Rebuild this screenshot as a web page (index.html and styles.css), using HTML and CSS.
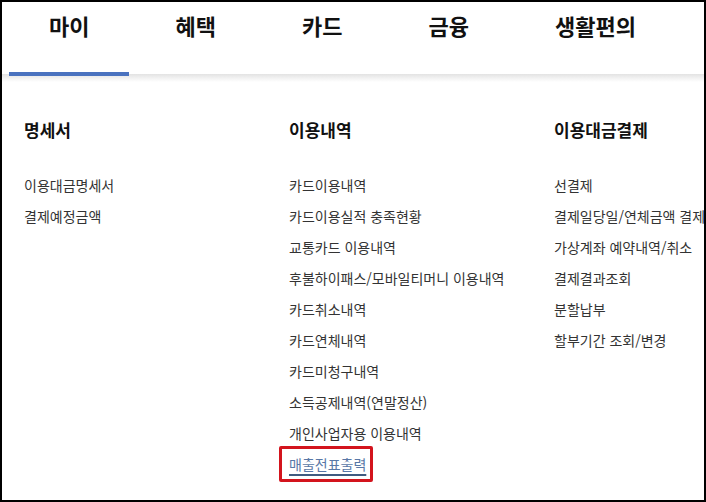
FILE: index.html
```html
<!DOCTYPE html>
<html lang="ko">
<head>
<meta charset="utf-8">
<title>메뉴</title>
<link rel="stylesheet" href="styles.css">
</head>
<body>
<div class="frame">
  <nav class="tabs">
    <a class="tab active">마이</a>
    <a class="tab">혜택</a>
    <a class="tab">카드</a>
    <a class="tab">금융</a>
    <a class="tab">생활편의</a>
  </nav>
  <div class="band"></div>
  <div class="cols">
    <section class="col">
      <h3 class="head">명세서</h3>
      <ul class="list">
        <li>이용대금명세서</li>
        <li>결제예정금액</li>
      </ul>
    </section>
    <section class="col">
      <h3 class="head">이용내역</h3>
      <ul class="list">
        <li>카드이용내역</li>
        <li>카드이용실적 충족현황</li>
        <li>교통카드 이용내역</li>
        <li>후불하이패스/모바일티머니 이용내역</li>
        <li>카드취소내역</li>
        <li>카드연체내역</li>
        <li>카드미청구내역</li>
        <li>소득공제내역(연말정산)</li>
        <li>개인사업자용 이용내역</li>
        <li><a class="link marked">매출전표출력</a></li>
      </ul>
    </section>
    <section class="col">
      <h3 class="head">이용대금결제</h3>
      <ul class="list">
        <li>선결제</li>
        <li>결제일당일/연체금액 결제</li>
        <li>가상계좌 예약내역/취소</li>
        <li>결제결과조회</li>
        <li>분할납부</li>
        <li>할부기간 조회/변경</li>
      </ul>
    </section>
  </div>
</div>
</body>
</html>
```
FILE: styles.css
```css
* { box-sizing: border-box; }
html, body { margin: 0; padding: 0; background: #fff; }
body {
  font-family: "Noto Sans CJK KR", "Noto Sans", sans-serif;
  color: #333;
}
.frame {
  width: 706px;
  height: 502px;
  border: 2px solid #000;
  overflow: hidden;
  background: #fff;
}
.tabs {
  display: flex;
  gap: 6px;
  padding-left: 7px;
  height: 74px;
}
.tab {
  display: block;
  height: 74px;
  padding: 8px 40px 0;
  font-size: 22px;
  line-height: 30px;
  font-weight: 700;
  color: #111;
  white-space: nowrap;
  border-bottom: 4px solid transparent;
  position: relative;
  z-index: 1;
}
.tab.active { border-bottom-color: #4a72bf; }
.band {
  height: 8px;
  margin-top: -2px;
  background: linear-gradient(#e3e3e3, #f4f4f4 60%, #fff);
}
.cols {
  display: grid;
  grid-template-columns: 265px 265px 265px;
  padding-left: 22px;
}
.col { min-width: 0; }
.head {
  margin: 36px 0 28px;
  font-size: 17px;
  line-height: 24px;
  font-weight: 700;
  color: #111;
  white-space: nowrap;
}
.list {
  list-style: none;
  margin: 0;
  padding: 0;
}
.list li {
  font-size: 14px;
  line-height: 31px;
  white-space: nowrap;
  color: #333;
}
.link {
  color: #5877a6;
  text-decoration: underline;
  text-decoration-color: #3f5b80;
  text-decoration-thickness: 2px;
  text-underline-offset: 4px;
}
.marked { position: relative; }
.marked::after {
  content: "";
  position: absolute;
  left: -10px;
  right: -7px;
  top: -8px;
  bottom: -8px;
  border: 3px solid #d3141d;
  border-radius: 2px;
}
```
